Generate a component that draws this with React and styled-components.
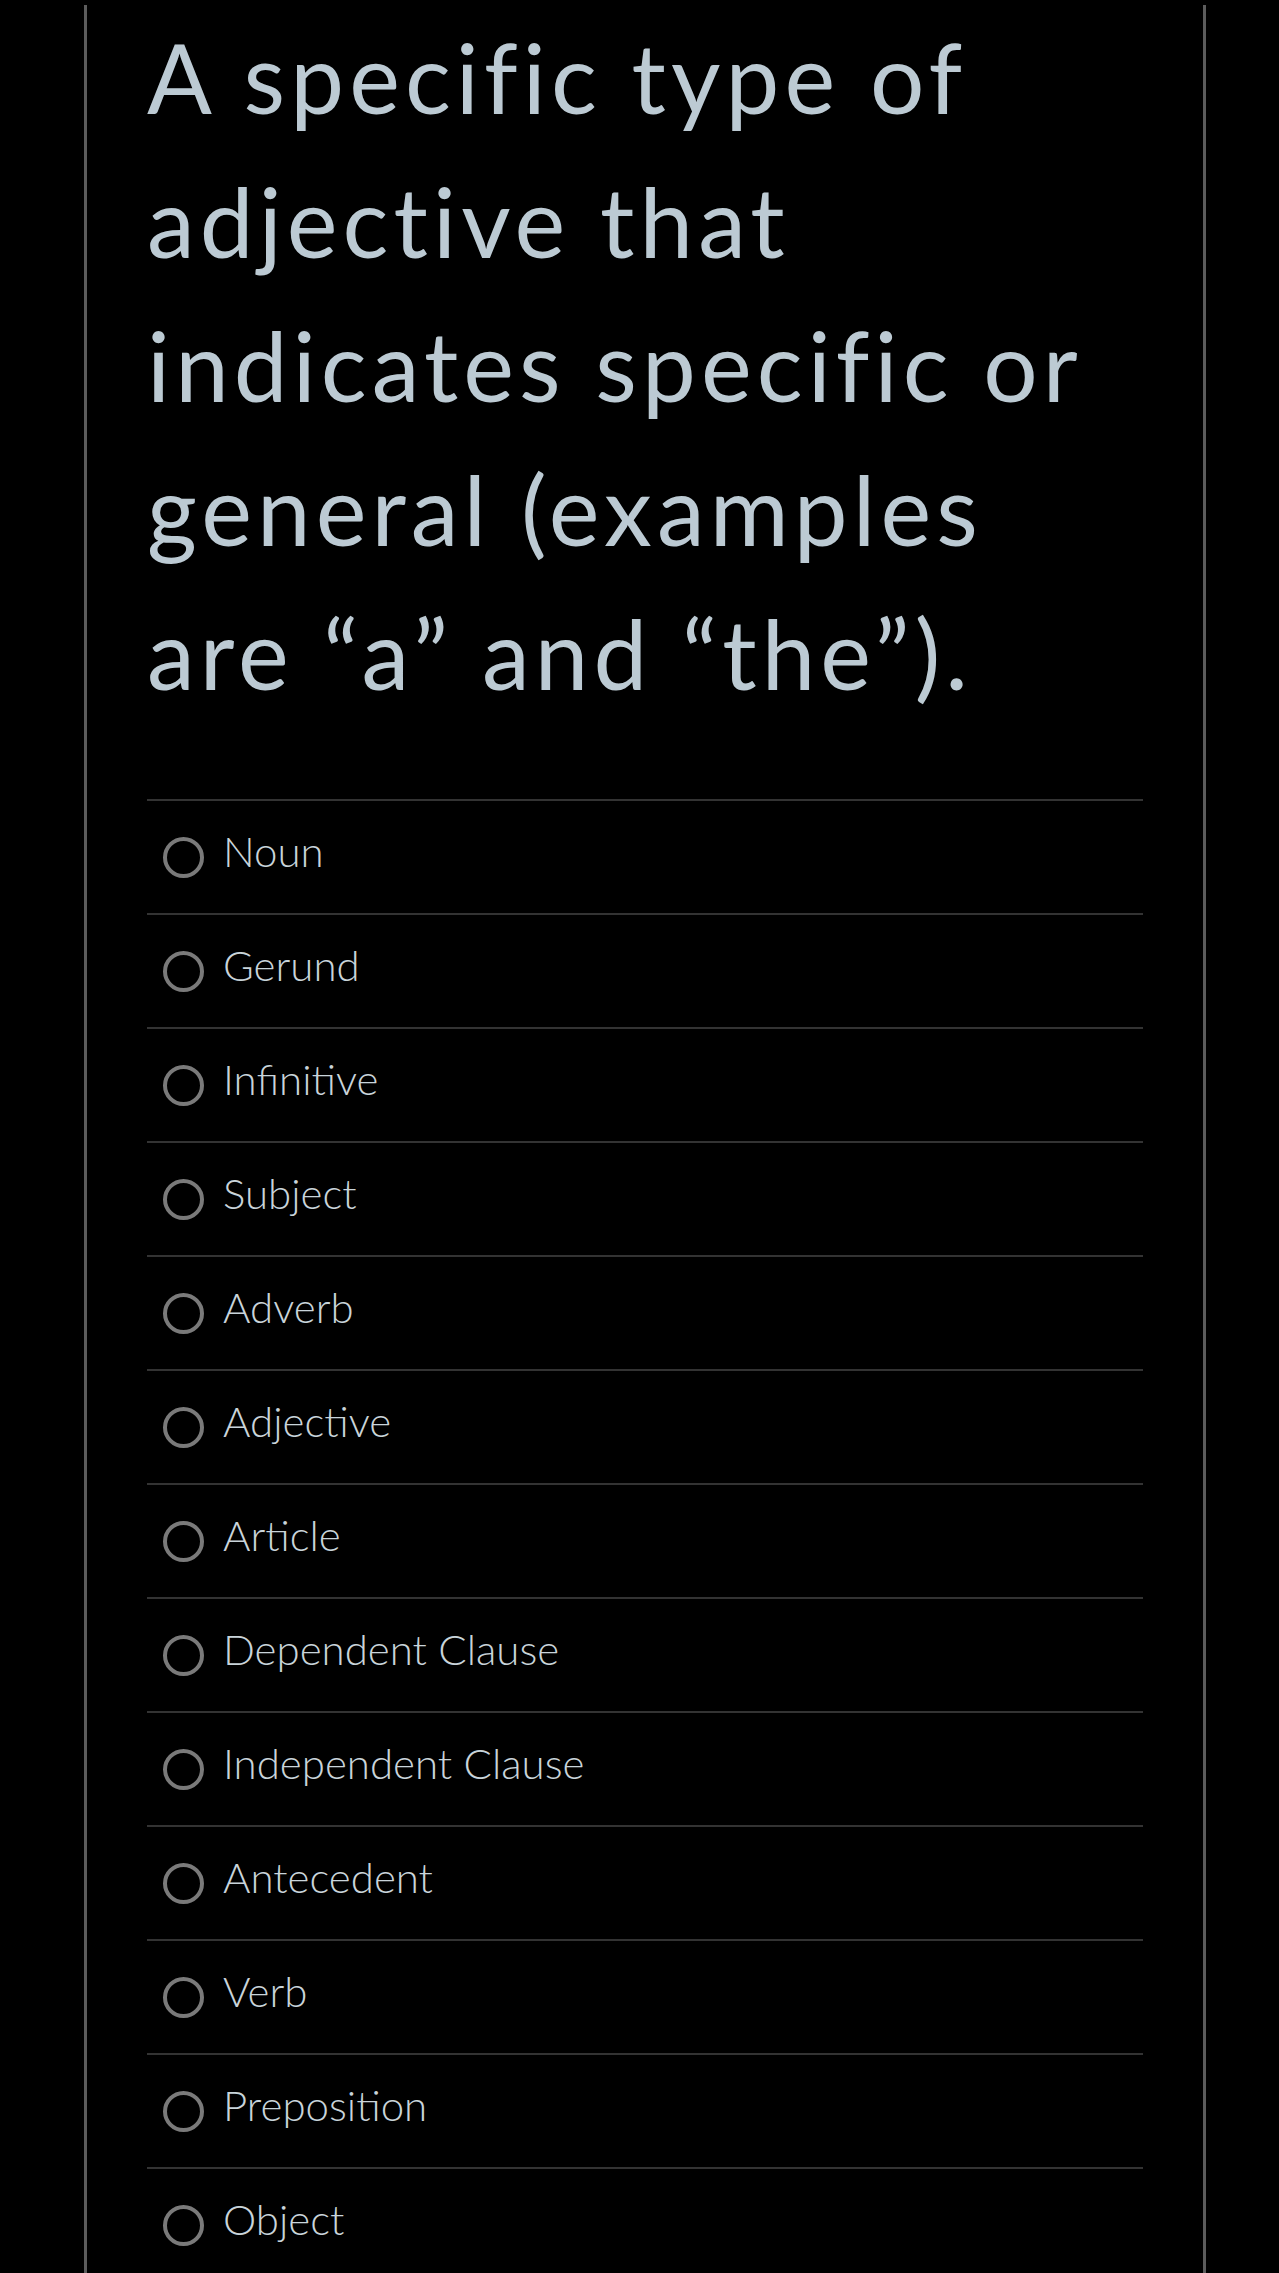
import React from 'react';
import styled, { createGlobalStyle } from 'styled-components';

const GlobalStyle = createGlobalStyle`
  html, body {
    margin: 0;
    padding: 0;
    background: #000000;
  }
  body {
    font-family: Lato, 'Open Sans', sans-serif;
  }
`;

const Panel = styled.div`
  box-sizing: border-box;
  width: 1122px;
  margin: 10px 0 0 84px;
  padding: 0 60px;
  border-left: 3px solid #5c5c5c;
  border-right: 3px solid #5c5c5c;
  min-height: 2263px;
`;

const Question = styled.h1`
  margin: -5px 0 74px;
  font-family: Lato, sans-serif;
  font-weight: 400;
  font-size: 96px;
  line-height: 144px;
  letter-spacing: 5.1px;
  color: #bccad3;
`;

const Choices = styled.ul`
  list-style: none;
  margin: 0;
  padding: 0;
`;

const Choice = styled.li`
  display: flex;
  align-items: center;
  height: 114px;
  box-sizing: border-box;
  border-top: 2px solid #333333;
  padding-left: 16px;
`;

const Radio = styled.span`
  flex: none;
  box-sizing: border-box;
  width: 41px;
  height: 41px;
  border: 4px solid #7a7a7a;
  border-radius: 50%;
  margin-right: 19px;
`;

const ChoiceLabel = styled.span`
  font-family: Lato, sans-serif;
  font-weight: 300;
  font-size: 42px;
  line-height: 50px;
  color: #c9d4da;
  margin-bottom: 12px;
`;

const choices = [
  'Noun',
  'Gerund',
  'Infinitive',
  'Subject',
  'Adverb',
  'Adjective',
  'Article',
  'Dependent Clause',
  'Independent Clause',
  'Antecedent',
  'Verb',
  'Preposition',
  'Object',
];

export default function App() {
  return (
    <>
      <GlobalStyle />
      <Panel>
        <Question>
          A specific type of adjective that indicates specific or general (examples are “a” and “the”).
        </Question>
        <Choices>
          {choices.map(c => (
            <Choice key={c}>
              <Radio />
              <ChoiceLabel>{c}</ChoiceLabel>
            </Choice>
          ))}
        </Choices>
      </Panel>
    </>
  );
}
